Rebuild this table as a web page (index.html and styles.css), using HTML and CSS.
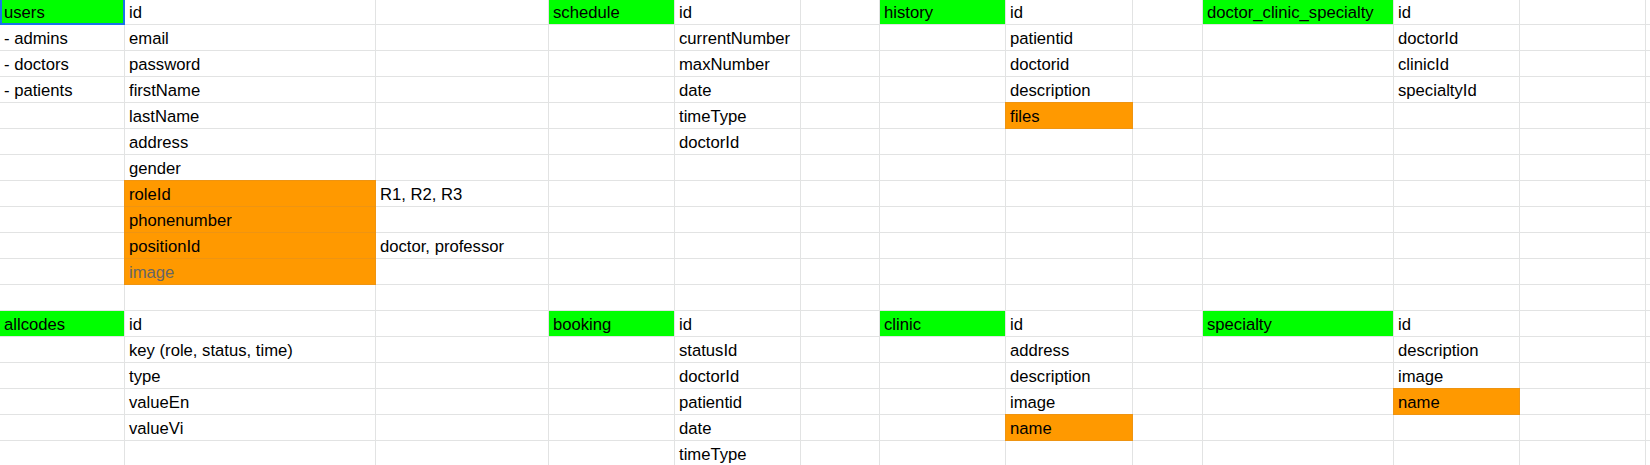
FILE: index.html
```html
<!DOCTYPE html>
<html>
<head>
<meta charset="utf-8">
<link rel="stylesheet" href="styles.css">
</head>
<body>
<div class="sheet">
  <!-- row 1 -->
  <div class="c g sel">users</div><div class="c">id</div><div class="c"></div><div class="c g">schedule</div><div class="c">id</div><div class="c"></div><div class="c g">history</div><div class="c">id</div><div class="c"></div><div class="c g">doctor_clinic_specialty</div><div class="c">id</div><div class="c"></div><div class="c"></div>
  <!-- row 2 -->
  <div class="c">- admins</div><div class="c">email</div><div class="c"></div><div class="c"></div><div class="c">currentNumber</div><div class="c"></div><div class="c"></div><div class="c">patientid</div><div class="c"></div><div class="c"></div><div class="c">doctorId</div><div class="c"></div><div class="c"></div>
  <!-- row 3 -->
  <div class="c">- doctors</div><div class="c">password</div><div class="c"></div><div class="c"></div><div class="c">maxNumber</div><div class="c"></div><div class="c"></div><div class="c">doctorid</div><div class="c"></div><div class="c"></div><div class="c">clinicId</div><div class="c"></div><div class="c"></div>
  <!-- row 4 -->
  <div class="c">- patients</div><div class="c">firstName</div><div class="c"></div><div class="c"></div><div class="c">date</div><div class="c"></div><div class="c"></div><div class="c">description</div><div class="c"></div><div class="c"></div><div class="c">specialtyId</div><div class="c"></div><div class="c"></div>
  <!-- row 5 -->
  <div class="c"></div><div class="c">lastName</div><div class="c"></div><div class="c"></div><div class="c">timeType</div><div class="c"></div><div class="c"></div><div class="c o">files</div><div class="c"></div><div class="c"></div><div class="c"></div><div class="c"></div><div class="c"></div>
  <!-- row 6 -->
  <div class="c"></div><div class="c">address</div><div class="c"></div><div class="c"></div><div class="c">doctorId</div><div class="c"></div><div class="c"></div><div class="c"></div><div class="c"></div><div class="c"></div><div class="c"></div><div class="c"></div><div class="c"></div>
  <!-- row 7 -->
  <div class="c"></div><div class="c">gender</div><div class="c"></div><div class="c"></div><div class="c"></div><div class="c"></div><div class="c"></div><div class="c"></div><div class="c"></div><div class="c"></div><div class="c"></div><div class="c"></div><div class="c"></div>
  <!-- row 8 -->
  <div class="c"></div><div class="c o">roleId</div><div class="c">R1, R2, R3</div><div class="c"></div><div class="c"></div><div class="c"></div><div class="c"></div><div class="c"></div><div class="c"></div><div class="c"></div><div class="c"></div><div class="c"></div><div class="c"></div>
  <!-- row 9 -->
  <div class="c"></div><div class="c o">phonenumber</div><div class="c"></div><div class="c"></div><div class="c"></div><div class="c"></div><div class="c"></div><div class="c"></div><div class="c"></div><div class="c"></div><div class="c"></div><div class="c"></div><div class="c"></div>
  <!-- row 10 -->
  <div class="c"></div><div class="c o">positionId</div><div class="c">doctor, professor</div><div class="c"></div><div class="c"></div><div class="c"></div><div class="c"></div><div class="c"></div><div class="c"></div><div class="c"></div><div class="c"></div><div class="c"></div><div class="c"></div>
  <!-- row 11 -->
  <div class="c"></div><div class="c o muted">image</div><div class="c"></div><div class="c"></div><div class="c"></div><div class="c"></div><div class="c"></div><div class="c"></div><div class="c"></div><div class="c"></div><div class="c"></div><div class="c"></div><div class="c"></div>
  <!-- row 12 -->
  <div class="c"></div><div class="c"></div><div class="c"></div><div class="c"></div><div class="c"></div><div class="c"></div><div class="c"></div><div class="c"></div><div class="c"></div><div class="c"></div><div class="c"></div><div class="c"></div><div class="c"></div>
  <!-- row 13 -->
  <div class="c g">allcodes</div><div class="c">id</div><div class="c"></div><div class="c g">booking</div><div class="c">id</div><div class="c"></div><div class="c g">clinic</div><div class="c">id</div><div class="c"></div><div class="c g">specialty</div><div class="c">id</div><div class="c"></div><div class="c"></div>
  <!-- row 14 -->
  <div class="c"></div><div class="c">key (role, status, time)</div><div class="c"></div><div class="c"></div><div class="c">statusId</div><div class="c"></div><div class="c"></div><div class="c">address</div><div class="c"></div><div class="c"></div><div class="c">description</div><div class="c"></div><div class="c"></div>
  <!-- row 15 -->
  <div class="c"></div><div class="c">type</div><div class="c"></div><div class="c"></div><div class="c">doctorId</div><div class="c"></div><div class="c"></div><div class="c">description</div><div class="c"></div><div class="c"></div><div class="c">image</div><div class="c"></div><div class="c"></div>
  <!-- row 16 -->
  <div class="c"></div><div class="c">valueEn</div><div class="c"></div><div class="c"></div><div class="c">patientid</div><div class="c"></div><div class="c"></div><div class="c">image</div><div class="c"></div><div class="c"></div><div class="c o">name</div><div class="c"></div><div class="c"></div>
  <!-- row 17 -->
  <div class="c"></div><div class="c">valueVi</div><div class="c"></div><div class="c"></div><div class="c">date</div><div class="c"></div><div class="c"></div><div class="c o">name</div><div class="c"></div><div class="c"></div><div class="c"></div><div class="c"></div><div class="c"></div>
  <!-- row 18 -->
  <div class="c"></div><div class="c"></div><div class="c"></div><div class="c"></div><div class="c">timeType</div><div class="c"></div><div class="c"></div><div class="c"></div><div class="c"></div><div class="c"></div><div class="c"></div><div class="c"></div><div class="c"></div>
</div>
</body>
</html>
```

FILE: styles.css
```css
html, body {
  margin: 0;
  padding: 0;
  background: #ffffff;
}

.sheet {
  display: grid;
  grid-template-columns: 124px 250px 172px 125px 125px 78px 125px 126px 69px 190px 125px 125px 1fr;
  grid-template-rows: 24px repeat(17, 25px);
  gap: 1px;
  background: #e2e3e3;
  width: 1650px;
  height: 465px;
  overflow: hidden;
}

.c {
  position: relative;
  background: #ffffff;
  color: #000000;
  font-family: "Liberation Sans", Arial, sans-serif;
  font-size: 16.67px;
  line-height: 20px;
  padding: 4px 4px 0 4px;
  white-space: nowrap;
  box-sizing: border-box;
}

.sheet > .c:nth-child(-n+13) {
  padding-top: 3px;
}

.g {
  background: #00ff00;
}

.o {
  background: #ff9900;
  box-shadow: 0 0 0 1px #ee9412;
}

.muted {
  color: #666666;
}

.sel::after {
  content: "";
  position: absolute;
  left: 0;
  top: -2px;
  right: -1px;
  bottom: -1px;
  border: 2px solid #1a73e8;
  box-sizing: border-box;
  pointer-events: none;
}
```
